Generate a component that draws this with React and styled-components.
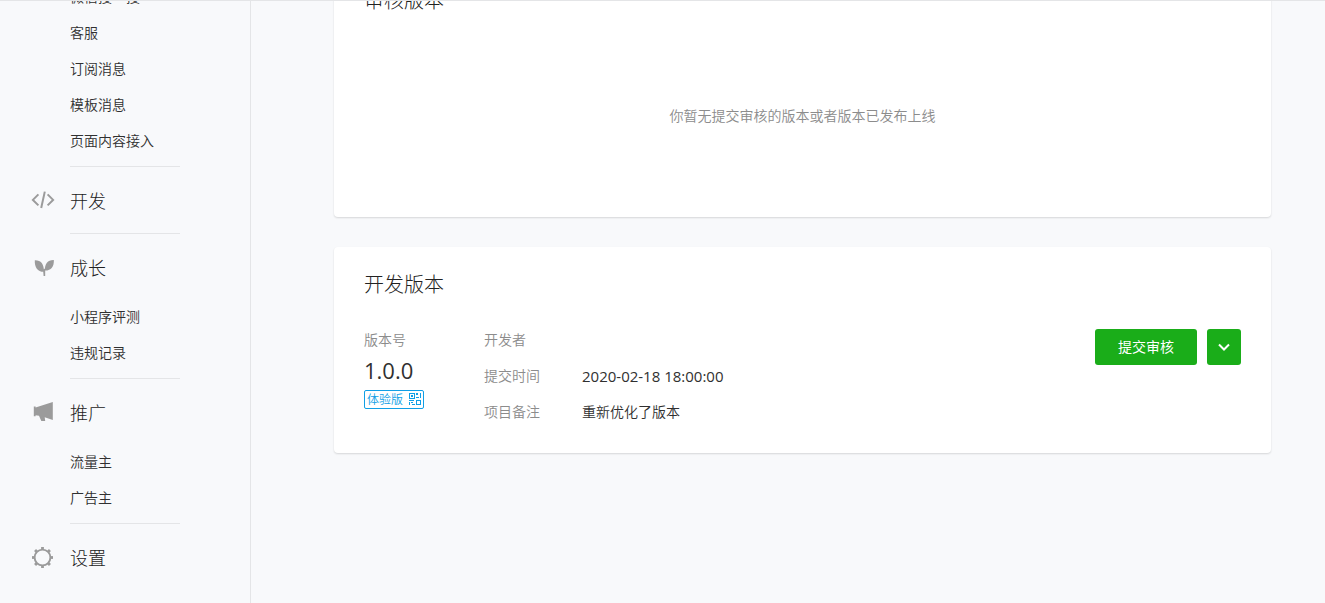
import React from "react";
import styled, { createGlobalStyle } from "styled-components";

const Colors = {
  Page: "#f8f9fb",
  Line: "#e4e5e7",
  Title: "#222222",
  Text: "#303030",
  Muted: "#8c8c8c",
  Green: "#1aad19",
  Blue: "#109fe6",
};

const GlobalStyle = createGlobalStyle`
  * {
    box-sizing: border-box;
  }
  body {
    margin: 0;
    background-color: ${Colors.Page};
    color: ${Colors.Text};
    font-family: "Open Sans", "Noto Sans CJK SC", sans-serif;
    font-size: 14px;
    font-weight: 350;
  }
  button {
    font: inherit;
  }
`;

const Page = styled.div`
  display: flex;
  height: 100vh;
  overflow: hidden;
  border-top: 1px solid ${Colors.Line};
`;

const Sidebar = styled.nav`
  flex: 0 0 251px;
  border-right: 1px solid ${Colors.Line};
`;
const Groups = styled.div`
  margin-top: -22px;
`;
const Group = styled.section`
  & + & {
    padding-top: 16px;
  }
  &:not(:last-child)::after {
    content: "";
    display: block;
    width: 110px;
    height: 1px;
    margin-left: 70px;
    background-color: ${Colors.Line};
  }
`;
const GroupTitle = styled.a`
  display: flex;
  align-items: center;
  gap: 15px;
  height: 36px;
  margin-bottom: ${(props) => (props.$hasItems ? 13 : 14)}px;
  padding: 0 0 2px 31px;
  color: ${Colors.Title};
  font-size: 18px;
  font-weight: 300;
  text-decoration: none;
`;
const SubMenu = styled.ul`
  margin: 0;
  padding: 0 0 7px 70px;
  list-style: none;
`;
const SubLink = styled.a`
  display: block;
  color: ${Colors.Text};
  line-height: 36px;
  text-decoration: none;
`;
const MenuIcon = styled.svg`
  width: 24px;
  height: 24px;
  color: #9b9b9b;
`;

const Main = styled.main`
  flex: 1;
  padding: 0 54px 0 83px;
`;
const Cards = styled.div`
  display: grid;
  gap: 30px;
  margin-top: -38px;
`;
const Card = styled.section`
  padding: 22px 30px 0;
  border-radius: 4px;
  background-color: #fff;
  box-shadow: 0 1px 2px rgba(0, 0, 0, 0.14);
`;
const CardTitle = styled.h2`
  margin: 0;
  color: ${Colors.Title};
  font-size: 20px;
  font-weight: 300;
  line-height: 32px;
`;
const Empty = styled.p`
  margin: 0;
  padding: 81px 0 83px;
  color: ${Colors.Muted};
  line-height: 36px;
  text-align: center;
`;
const CardBody = styled.div`
  display: flex;
  align-items: flex-start;
  padding: 21px 0 23px;
`;

const Version = styled.div`
  width: 120px;
`;
const Label = styled.div`
  color: ${Colors.Muted};
  line-height: 36px;
`;
const VersionNumber = styled.div`
  font-size: 22px;
  font-weight: 400;
  line-height: 24px;
`;
const TrialButton = styled.button`
  display: flex;
  align-items: center;
  justify-content: space-between;
  width: 60px;
  height: 19px;
  margin-top: 8px;
  padding: 0 1px 0 2px;
  border: 1px solid ${Colors.Blue};
  border-radius: 2px;
  background: none;
  color: ${Colors.Blue};
  font-size: 12px;
  line-height: 16px;
`;
const Details = styled.dl`
  display: grid;
  flex: 1;
  grid-template-columns: 98px 1fr;
  grid-auto-rows: 36px;
  margin: 0;
  line-height: 36px;
`;
const Term = styled.dt`
  color: ${Colors.Muted};
`;
const Value = styled.dd`
  margin: 0;
`;
const Time = styled.time`
  font-size: 15px;
  font-weight: 400;
`;
const Actions = styled.div`
  display: flex;
  gap: 10px;
  padding-top: 7px;
`;
const Button = styled.button`
  display: flex;
  align-items: center;
  justify-content: center;
  width: ${(props) => (props.$square ? 34 : 102)}px;
  height: 36px;
  padding: 0 0 ${(props) => (props.$square ? 0 : 2)}px;
  border: 0;
  border-radius: 3px;
  background-color: ${Colors.Green};
  color: #fff;
  font-weight: 400;
`;

const CodeIcon = () => (
  <MenuIcon viewBox="0 0 24 24" fill="none" stroke="currentColor" strokeWidth="2">
    <path d="M7.4 6.4 1.9 11.9l5.5 5.5M16.6 6.4l5.5 5.5-5.5 5.5M13.8 3.6l-3.6 16.4" />
  </MenuIcon>
);

const LeafIcon = () => (
  <MenuIcon viewBox="0 0 24 24" fill="currentColor">
    <path d="M3.8 5.2C9.8 5 13 8.6 12.9 16.8 6.8 17 3.4 12.4 3.8 5.2Z" />
    <path d="M22.8 5C16.8 4.8 13.7 8.6 13.8 15.6 20 15.8 23.2 11.6 22.8 5Z" />
    <path d="M12 14.5 14.2 13.5V21H12.6Z" />
  </MenuIcon>
);

const MegaphoneIcon = () => (
  <MenuIcon viewBox="0 0 24 24" fill="currentColor">
    <path d="M2.8 6.6H4.6V7.6L21.8 2V20L13.7 17.2 14.2 21H10.3L8 15.8 4.6 15.2V16.2H2.8Z" />
  </MenuIcon>
);

const GearIcon = () => (
  <MenuIcon viewBox="0 0 24 24" fill="none" stroke="currentColor">
    <circle cx="11.5" cy="12.5" r="7.9" strokeWidth="1.9" />
    {[0, 45, 90, 135, 180, 225, 270, 315].map((angle) => (
      <path
        key={angle}
        d="M11.5 2V5"
        strokeWidth="2.8"
        transform={`rotate(${angle} 11.5 12.5)`}
      />
    ))}
  </MenuIcon>
);

const QrIcon = () => (
  <svg width="13" height="13" viewBox="0 0 13 13" fill="currentColor">
    <path
      fillRule="evenodd"
      d="M0 0h6v6H0zM1 1v4h4V1zM7 7h5v5H7zM8 8v3h3V8z"
    />
    <path d="M2 2h2v2H2zM7 0h2v2H7zM11 0h1v5h-1zM7 4h3v1H7zM0 7h5v1H0zM0 9h1v3H0zM2 9h2v1H2zM3 11h3v1H3z" />
  </svg>
);

const ChevronIcon = () => (
  <svg width="12" height="12" viewBox="0 0 12 12" fill="none" stroke="currentColor" strokeWidth="2">
    <path d="M1 3.5 6 8.5l5-5" />
  </svg>
);

const groups = [
  { items: ["微信搜一搜", "客服", "订阅消息", "模板消息", "页面内容接入"] },
  { title: "开发", Icon: CodeIcon, items: [] },
  { title: "成长", Icon: LeafIcon, items: ["小程序评测", "违规记录"] },
  { title: "推广", Icon: MegaphoneIcon, items: ["流量主", "广告主"] },
  { title: "设置", Icon: GearIcon, items: [] },
];

const details = [
  { label: "开发者", value: "" },
  { label: "提交时间", value: <Time>2020-02-18 18:00:00</Time> },
  { label: "项目备注", value: "重新优化了版本" },
];

const Menu = () => (
  <Sidebar>
    <Groups>
      {groups.map(({ title, Icon, items }) => (
        <Group key={items[0] || title}>
          {title && (
            <GroupTitle href="#" $hasItems={items.length > 0}>
              <Icon />
              {title}
            </GroupTitle>
          )}
          {items.length > 0 && (
            <SubMenu>
              {items.map((item) => (
                <li key={item}>
                  <SubLink href="#">{item}</SubLink>
                </li>
              ))}
            </SubMenu>
          )}
        </Group>
      ))}
    </Groups>
  </Sidebar>
);

const App = () => (
  <>
    <GlobalStyle />
    <Page lang="zh-CN">
      <Menu />
      <Main>
        <Cards>
          <Card>
            <CardTitle>审核版本</CardTitle>
            <Empty>你暂无提交审核的版本或者版本已发布上线</Empty>
          </Card>
          <Card>
            <CardTitle>开发版本</CardTitle>
            <CardBody>
              <Version>
                <Label>版本号</Label>
                <VersionNumber>1.0.0</VersionNumber>
                <TrialButton type="button">
                  体验版
                  <QrIcon />
                </TrialButton>
              </Version>
              <Details>
                {details.map(({ label, value }) => (
                  <React.Fragment key={label}>
                    <Term>{label}</Term>
                    <Value>{value}</Value>
                  </React.Fragment>
                ))}
              </Details>
              <Actions>
                <Button type="button">提交审核</Button>
                <Button type="button" $square aria-label="更多操作">
                  <ChevronIcon />
                </Button>
              </Actions>
            </CardBody>
          </Card>
        </Cards>
      </Main>
    </Page>
  </>
);

export default App;
